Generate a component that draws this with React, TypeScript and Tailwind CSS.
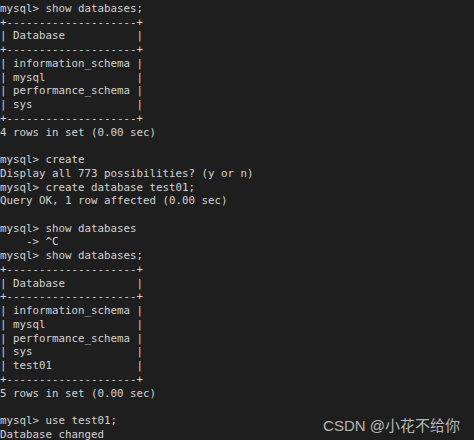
import React from "react";

const lines = [
  "mysql> show databases;",
  "+--------------------+",
  "| Database           |",
  "+--------------------+",
  "| information_schema |",
  "| mysql              |",
  "| performance_schema |",
  "| sys                |",
  "+--------------------+",
  "4 rows in set (0.00 sec)",
  "",
  "mysql> create",
  "Display all 773 possibilities? (y or n)",
  "mysql> create database test01;",
  "Query OK, 1 row affected (0.00 sec)",
  "",
  "mysql> show databases",
  "    -> ^C",
  "mysql> show databases;",
  "+--------------------+",
  "| Database           |",
  "+--------------------+",
  "| information_schema |",
  "| mysql              |",
  "| performance_schema |",
  "| sys                |",
  "| test01             |",
  "+--------------------+",
  "5 rows in set (0.00 sec)",
  "",
  "mysql> use test01;",
  "Database changed",
];

export default function App() {
  return (
    <div className="relative w-[474px] h-[440px] overflow-hidden bg-[#1e1e1e]">
      <pre className="m-0 pl-0 pt-[2px] font-['DejaVu_Sans_Mono',monospace] text-[10.8px] leading-[13.74px] text-[#d2d2d2] whitespace-pre">
        {lines.map((l, i) => (
          <div key={i} className="h-[13.74px]">{l || " "}</div>
        ))}
      </pre>
      <div className="absolute right-[14px] bottom-[5px] font-['Liberation_Sans','Noto_Sans_CJK_SC',sans-serif] text-[15px] leading-[18px] text-[#b8b8b8]">
        CSDN @小花不给你
      </div>
    </div>
  );
}
